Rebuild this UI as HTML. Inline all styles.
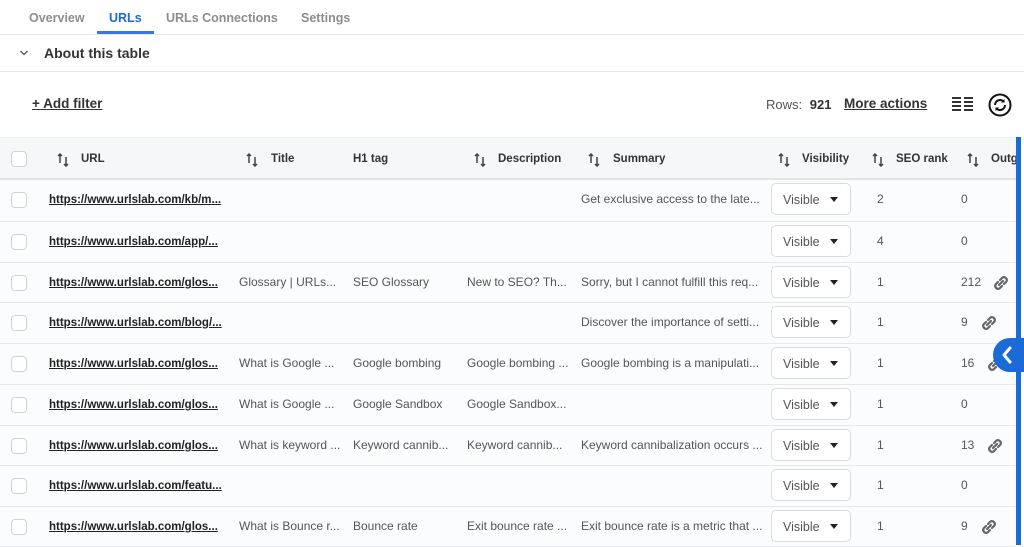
<!DOCTYPE html>
<html><head><meta charset="utf-8"><style>
*{box-sizing:border-box;margin:0;padding:0}
body{width:1024px;height:545px;overflow:hidden;background:#fff;font-family:"Liberation Sans",Arial,sans-serif;position:relative;color:#333}
.a{position:absolute;white-space:nowrap}
.tab{top:11px;font-size:12.5px;font-weight:bold;color:#8a8d92}
.row{position:absolute;left:0;width:1016px;height:41px;border-top:1px solid #e6e8ec;background:#fbfcfd;font-size:12px;color:#555}
.row .a{top:12px}
.row .a.url{top:14px}
.cb{position:absolute;left:11px;top:12px;width:16px;height:16px;border:1px solid #cfd3d8;border-radius:4px;background:#fff}
.url{left:49px;font-weight:bold;color:#222;text-decoration:underline;font-size:11.5px}
.sel{position:absolute;left:771px;top:3px;width:80px;height:32px;border:1px solid #d9dce0;border-radius:5px;background:#fff;font-size:12.5px;color:#555;padding:9px 0 0 11px}
.sel:after{content:"";position:absolute;right:12px;top:13px;border:4px solid transparent;border-top:5px solid #222}
.h{font-size:11.5px;font-weight:bold;color:#333;top:15px}
.sort{position:absolute;top:13px}
</style></head><body>
<div class="a tab" style="left:29px">Overview</div>
<div class="a tab" style="left:109px;color:#1a6ad8">URLs</div>
<div class="a" style="left:97px;top:31px;width:57px;height:3px;background:#3577e6"></div>
<div class="a tab" style="left:166px">URLs Connections</div>
<div class="a tab" style="left:301px">Settings</div>
<div class="a" style="left:0;top:34px;width:1024px;height:1px;background:#e6e7e9"></div>
<svg class="a" style="left:19px;top:49px" width="10" height="8"><path d="M1.5 2 L5 5.5 L8.5 2" fill="none" stroke="#555" stroke-width="1.3"/></svg>
<div class="a" style="left:44px;top:45px;font-size:14px;font-weight:bold;color:#333">About this table</div>
<div class="a" style="left:0;top:71px;width:1024px;height:1px;background:#e6e7e9"></div>
<div class="a" style="left:32px;top:96px;font-size:13.5px;font-weight:bold;color:#333;text-decoration:underline">+ Add filter</div>
<div class="a" style="left:766px;top:97px;font-size:13px;color:#555">Rows: <b style="color:#333;margin-left:4px">921</b></div>
<div class="a" style="left:844px;top:96px;font-size:13.5px;font-weight:bold;color:#333;text-decoration:underline">More actions</div>
<svg class="a" style="left:952px;top:97px" width="22" height="14"><g stroke="#333" stroke-width="2"><path d="M0 1h9M0 5h9M0 9h9M0 13h9M12 1h9M12 5h9M12 9h9M12 13h9"/></g></svg>
<svg class="a" style="left:988px;top:93px" width="24" height="24"><circle cx="12" cy="12" r="10.5" fill="none" stroke="#111" stroke-width="2"/><path d="M7 12a5 5 0 0 1 9-3M17 12a5 5 0 0 1-9 3" fill="none" stroke="#111" stroke-width="2"/><path d="M16.5 6v3.5h-3.5z M7.5 18v-3.5h3.5z" fill="#111"/></svg>

<div class="a" style="left:0;top:137px;width:1016px;height:43px;background:#f6f7f9;border-top:1px solid #eceef1;border-bottom:2px solid #e2e4e8">
<div class="cb" style="top:13px"></div>
<svg class="sort" style="left:56px" width="14" height="16"><path d="M4 12V3M2 5L4 3l2 2M10 6v9M8 13l2 2 2-2" fill="none" stroke="#444" stroke-width="1.5"/></svg>
<div class="a h" style="left:81px">URL</div>
<svg class="sort" style="left:245px" width="14" height="16"><path d="M4 12V3M2 5L4 3l2 2M10 6v9M8 13l2 2 2-2" fill="none" stroke="#444" stroke-width="1.5"/></svg>
<div class="a h" style="left:271px">Title</div>
<div class="a h" style="left:353px">H1 tag</div>
<svg class="sort" style="left:473px" width="14" height="16"><path d="M4 12V3M2 5L4 3l2 2M10 6v9M8 13l2 2 2-2" fill="none" stroke="#444" stroke-width="1.5"/></svg>
<div class="a h" style="left:498px">Description</div>
<svg class="sort" style="left:587px" width="14" height="16"><path d="M4 12V3M2 5L4 3l2 2M10 6v9M8 13l2 2 2-2" fill="none" stroke="#444" stroke-width="1.5"/></svg>
<div class="a h" style="left:613px">Summary</div>
<svg class="sort" style="left:777px" width="14" height="16"><path d="M4 12V3M2 5L4 3l2 2M10 6v9M8 13l2 2 2-2" fill="none" stroke="#444" stroke-width="1.5"/></svg>
<div class="a h" style="left:802px">Visibility</div>
<svg class="sort" style="left:871px" width="14" height="16"><path d="M4 12V3M2 5L4 3l2 2M10 6v9M8 13l2 2 2-2" fill="none" stroke="#444" stroke-width="1.5"/></svg>
<div class="a h" style="left:896px">SEO rank</div>
<svg class="sort" style="left:966px" width="14" height="16"><path d="M4 12V3M2 5L4 3l2 2M10 6v9M8 13l2 2 2-2" fill="none" stroke="#444" stroke-width="1.5"/></svg>
<div class="a h" style="left:991px">Outgoing</div>
</div>

<div class="row" style="top:180px;border-top:none"><div class="cb"></div><span class="a url">https://www.urlslab.com/kb/m...</span><span class="a" style="left:581px">Get exclusive access to the late...</span><div class="sel">Visible</div><span class="a" style="left:877px">2</span><span class="a" style="left:961px">0</span></div>
<div class="row" style="top:221px"><div class="cb"></div><span class="a url">https://www.urlslab.com/app/...</span><div class="sel">Visible</div><span class="a" style="left:877px">4</span><span class="a" style="left:961px">0</span></div>
<div class="row" style="top:262px"><div class="cb"></div><span class="a url">https://www.urlslab.com/glos...</span><span class="a" style="left:239px">Glossary | URLs...</span><span class="a" style="left:353px">SEO Glossary</span><span class="a" style="left:467px">New to SEO? Th...</span><span class="a" style="left:581px">Sorry, but I cannot fulfill this req...</span><div class="sel">Visible</div><span class="a" style="left:877px">1</span><span class="a" style="left:961px">212</span><svg class="a" style="left:992px;top:11px" width="18" height="18"><g fill="none" stroke="#666" stroke-width="2.2" stroke-linecap="round"><path d="M8 6l2.5-2.5a3 3 0 0 1 4 4L12 10"/><path d="M10 12l-2.5 2.5a3 3 0 0 1-4-4L6 8"/><path d="M7 11l4-4"/></g></svg></div>
<div class="row" style="top:302px"><div class="cb"></div><span class="a url">https://www.urlslab.com/blog/...</span><span class="a" style="left:581px">Discover the importance of setti...</span><div class="sel">Visible</div><span class="a" style="left:877px">1</span><span class="a" style="left:961px">9</span><svg class="a" style="left:980px;top:11px" width="18" height="18"><g fill="none" stroke="#666" stroke-width="2.2" stroke-linecap="round"><path d="M8 6l2.5-2.5a3 3 0 0 1 4 4L12 10"/><path d="M10 12l-2.5 2.5a3 3 0 0 1-4-4L6 8"/><path d="M7 11l4-4"/></g></svg></div>
<div class="row" style="top:343px"><div class="cb"></div><span class="a url">https://www.urlslab.com/glos...</span><span class="a" style="left:239px">What is Google ...</span><span class="a" style="left:353px">Google bombing</span><span class="a" style="left:467px">Google bombing ...</span><span class="a" style="left:581px">Google bombing is a manipulati...</span><div class="sel">Visible</div><span class="a" style="left:877px">1</span><span class="a" style="left:961px">16</span><svg class="a" style="left:986px;top:11px" width="18" height="18"><g fill="none" stroke="#666" stroke-width="2.2" stroke-linecap="round"><path d="M8 6l2.5-2.5a3 3 0 0 1 4 4L12 10"/><path d="M10 12l-2.5 2.5a3 3 0 0 1-4-4L6 8"/><path d="M7 11l4-4"/></g></svg></div>
<div class="row" style="top:384px"><div class="cb"></div><span class="a url">https://www.urlslab.com/glos...</span><span class="a" style="left:239px">What is Google ...</span><span class="a" style="left:353px">Google Sandbox</span><span class="a" style="left:467px">Google Sandbox...</span><div class="sel">Visible</div><span class="a" style="left:877px">1</span><span class="a" style="left:961px">0</span></div>
<div class="row" style="top:425px"><div class="cb"></div><span class="a url">https://www.urlslab.com/glos...</span><span class="a" style="left:239px">What is keyword ...</span><span class="a" style="left:353px">Keyword cannib...</span><span class="a" style="left:467px">Keyword cannib...</span><span class="a" style="left:581px">Keyword cannibalization occurs ...</span><div class="sel">Visible</div><span class="a" style="left:877px">1</span><span class="a" style="left:961px">13</span><svg class="a" style="left:986px;top:11px" width="18" height="18"><g fill="none" stroke="#666" stroke-width="2.2" stroke-linecap="round"><path d="M8 6l2.5-2.5a3 3 0 0 1 4 4L12 10"/><path d="M10 12l-2.5 2.5a3 3 0 0 1-4-4L6 8"/><path d="M7 11l4-4"/></g></svg></div>
<div class="row" style="top:465px"><div class="cb"></div><span class="a url">https://www.urlslab.com/featu...</span><div class="sel">Visible</div><span class="a" style="left:877px">1</span><span class="a" style="left:961px">0</span></div>
<div class="row" style="top:506px;border-bottom:1px solid #e6e8ec"><div class="cb"></div><span class="a url">https://www.urlslab.com/glos...</span><span class="a" style="left:239px">What is Bounce r...</span><span class="a" style="left:353px">Bounce rate</span><span class="a" style="left:467px">Exit bounce rate ...</span><span class="a" style="left:581px">Exit bounce rate is a metric that ...</span><div class="sel">Visible</div><span class="a" style="left:877px">1</span><span class="a" style="left:961px">9</span><svg class="a" style="left:980px;top:11px" width="18" height="18"><g fill="none" stroke="#666" stroke-width="2.2" stroke-linecap="round"><path d="M8 6l2.5-2.5a3 3 0 0 1 4 4L12 10"/><path d="M10 12l-2.5 2.5a3 3 0 0 1-4-4L6 8"/><path d="M7 11l4-4"/></g></svg></div>

<div class="a" style="left:1016px;top:137px;width:5px;height:408px;background:#1a6ad8"></div>
<div class="a" style="left:1021px;top:137px;width:3px;height:408px;background:#fff"></div>
<div class="a" style="left:993px;top:338px;width:34px;height:34px;border-radius:17px 0 0 17px;background:#1a6ad8"></div>
<svg class="a" style="left:999px;top:345px" width="16" height="20"><path d="M11 3L5 10l6 7" fill="none" stroke="#fff" stroke-width="3" stroke-linecap="round" stroke-linejoin="round"/></svg>
</body></html>
